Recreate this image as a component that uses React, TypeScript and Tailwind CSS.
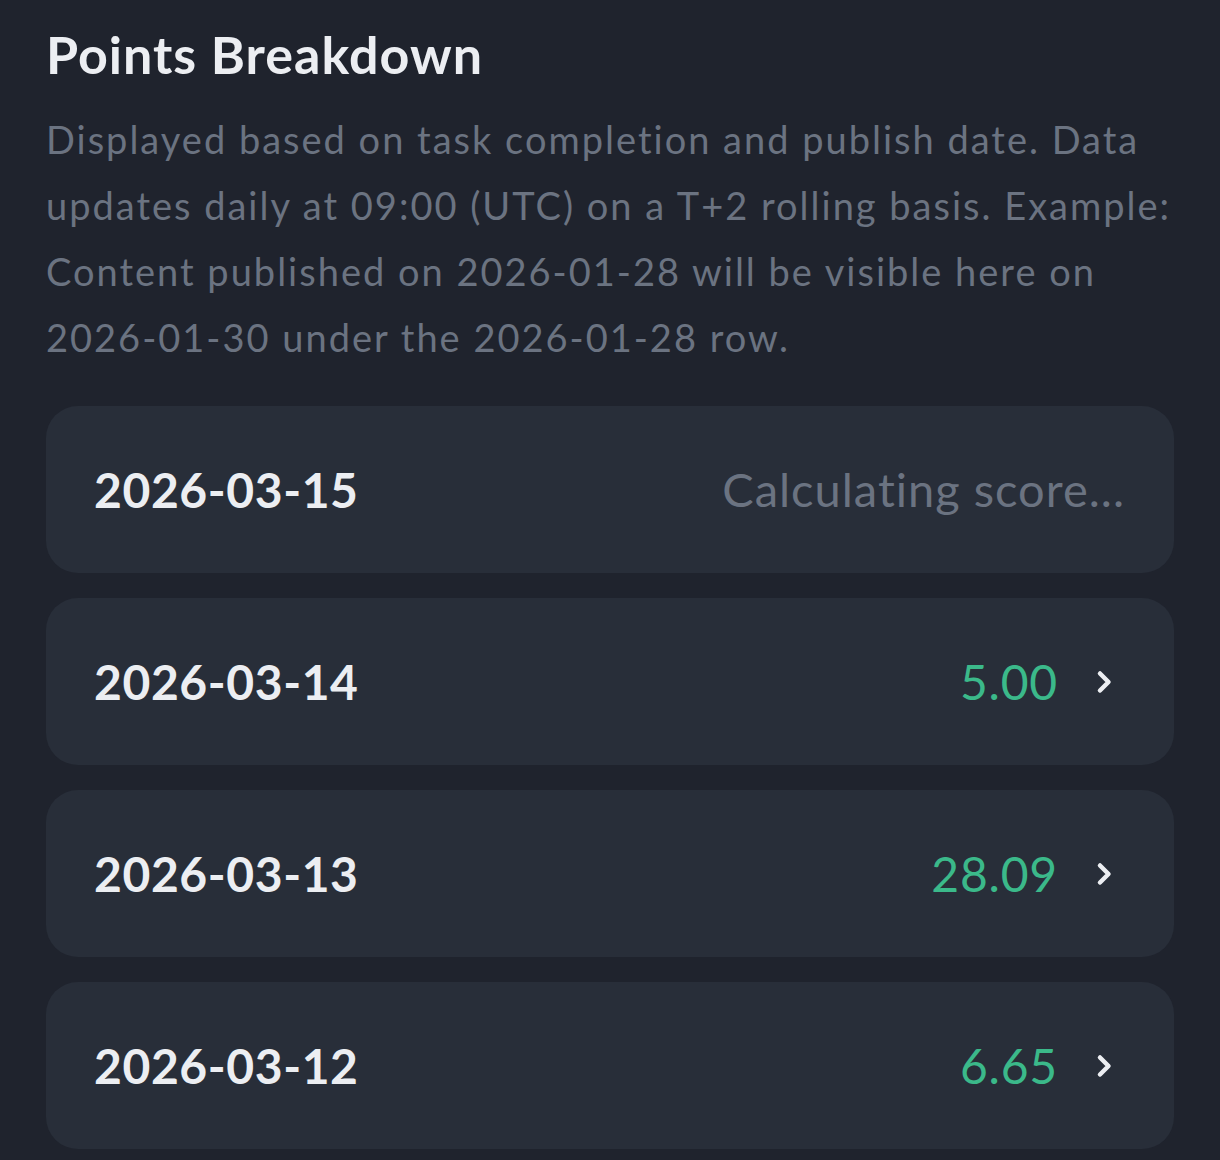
const rows = [
  { date: '2026-03-15', score: null },
  { date: '2026-03-14', score: '5.00' },
  { date: '2026-03-13', score: '28.09' },
  { date: '2026-03-12', score: '6.65' },
]

const font = { fontFamily: 'Lato, "Noto Sans", sans-serif' }

function Chevron() {
  return (
    <svg width="18" height="26" viewBox="0 0 18 26" fill="none" className="text-[#eceef2]">
      <path d="M4 4.5 L12.5 13 L4 21.5" stroke="currentColor" strokeWidth="4.5" strokeLinecap="round" strokeLinejoin="round" />
    </svg>
  )
}

export default function App() {
  return (
    <div className="min-h-screen w-full bg-[#1f232d] px-[46px] pt-[22px] pb-[10px]" style={font}>
      <h1 className="text-[52px] leading-[64px] font-bold text-[#eceef2] tracking-[1px]">Points Breakdown</h1>
      <p className="mt-[20px] text-[38px] leading-[66px] text-[#6b7381] tracking-[2px]">
        Displayed based on task completion and publish date. Data updates daily at 09:00 (UTC) on a T+2 rolling basis. Example: Content published on 2026-01-28 will be visible here on 2026-01-30 under the 2026-01-28 row.
      </p>
      <div className="mt-[36px] flex flex-col gap-[25px]">
        {rows.map((r) => (
          <div key={r.date} className="h-[167px] rounded-[32px] bg-[#282e39] flex items-center justify-between pl-[48px] pr-[49px]">
            <span className="text-[48px] font-bold text-[#eceef2] tracking-[0.6px]">{r.date}</span>
            {r.score === null ? (
              <span className="text-[47px] text-[#6b7381] tracking-[1px]">Calculating score...</span>
            ) : (
              <div className="flex items-center gap-[38px] pr-[11px]">
                <span className="text-[48px] text-[#3bb98a] tracking-[0.8px]">{r.score}</span>
                <Chevron />
              </div>
            )}
          </div>
        ))}
      </div>
    </div>
  )
}
